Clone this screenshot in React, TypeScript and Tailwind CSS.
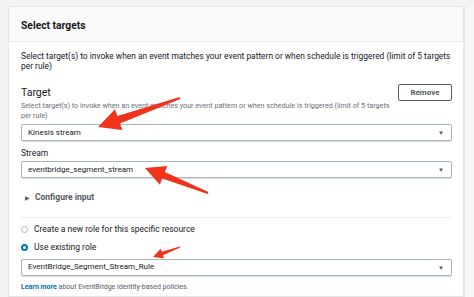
import React from 'react';

const font = { fontFamily: 'Roboto, "Liberation Sans", sans-serif' };

const Select: React.FC<{ value: string }> = ({ value }) => (
  <div className="flex h-[17px] items-center justify-between rounded-[2px] border border-[#aab7b8] bg-white pl-[6px] pr-[7px] shadow-[0_1px_1px_rgba(0,0,0,0.15)]">
    <span className="text-[8px] text-[#16191f]">{value}</span>
    <span className="text-[6px] text-[#545b64]">▼</span>
  </div>
);

const Radio: React.FC<{ checked?: boolean; label: string }> = ({ checked, label }) => (
  <div className="flex h-[18px] items-center gap-[6px]">
    {checked ? (
      <span className="h-[7px] w-[7px] rounded-full border-[2px] border-[#0073bb] bg-white" />
    ) : (
      <span className="h-[7px] w-[7px] rounded-full border border-[#aab7b8] bg-white" />
    )}
    <span className="text-[8.5px] text-[#16191f]">{label}</span>
  </div>
);

const Arrows = () => (
  <svg className="pointer-events-none absolute inset-0" width="474" height="297" viewBox="0 0 474 297">
    <polygon
      fill="#f0341c"
      points="98,127 122.4,130.1 120,123.5 180.3,98.9 179.7,97.1 117.4,115.9 115,109.3"
    />
    <polygon
      fill="#f0341c"
      points="145,168 167.3,166.1 164.9,172.1 208.4,192.1 207.6,193.9 162.3,178.6 159.9,184.7"
    />
    <polygon
      fill="#f0341c"
      points="153,257 164.1,258.2 163,255.2 180.2,247.6 179.8,246.4 161.8,251.8 160.7,248.8"
    />
  </svg>
);

export default function App() {
  return (
    <div className="relative h-[297px] w-[474px] overflow-hidden bg-[#f2f3f3]" style={font}>
      <div className="flex h-full">
        <div className="ml-[8px] mt-[6px] w-[456px] border border-[#e4e7e8] bg-white">
          {/* header */}
          <div className="flex h-[35px] items-center border-b border-[#eaeded] bg-[#fafafa] px-[12px] pt-[3px]">
            <h2 className="text-[10.3px] font-bold text-[#16191f]">Select targets</h2>
          </div>

          <div className="pl-[12px] pr-[11px]">
            <p className="mt-[9px] text-[8.4px] leading-[10px] text-[#16191f]">
              Select target(s) to invoke when an event matches your event pattern or when schedule is triggered (limit of 5 targets per rule)
            </p>

            <div className="mt-[13px] flex items-center justify-between">
              <span className="text-[10.5px] text-[#16191f]">Target</span>
              <button className="flex h-[17px] w-[54px] items-center justify-center rounded-[2px] border border-[#545b64] bg-white text-[8px] font-bold text-[#545b64]">
                Remove
              </button>
            </div>
            <p className="max-w-[376px] text-[7.2px] leading-[10px] text-[#687078]">
              Select target(s) to invoke when an event matches your event pattern or when schedule is triggered (limit of 5 targets per rule)
            </p>

            <div className="mt-[3px]">
              <Select value="Kinesis stream" />
            </div>

            <div className="mt-[5px] text-[8.5px] leading-[14px] text-[#16191f]">Stream</div>
            <div className="mt-[1px]">
              <Select value="eventbridge_segment_stream" />
            </div>

            <div className="mt-[13px] flex items-center gap-[5px] pl-[4px]">
              <span className="text-[6px] text-[#545b64]">▶</span>
              <span className="text-[8.5px] font-bold text-[#545b64]">Configure input</span>
            </div>

            <div className="mt-[13px] border-t border-[#eaeded]" />

            <div className="mt-[3px]">
              <Radio label="Create a new role for this specific resource" />
              <Radio checked label="Use existing role" />
            </div>

            <div className="mt-[2px]">
              <Select value="EventBridge_Segment_Stream_Rule" />
            </div>

            <p className="mt-[6px] text-[7px] text-[#545b64]">
              <span className="font-bold text-[#0073bb]">Learn more</span> about EventBridge identity-based policies.
            </p>
          </div>
        </div>
        <div className="ml-[0px] mt-[6px] w-[10px] border-l border-[#e4e7e8] bg-[#f7f7f7]" />
      </div>
      <Arrows />
    </div>
  );
}
